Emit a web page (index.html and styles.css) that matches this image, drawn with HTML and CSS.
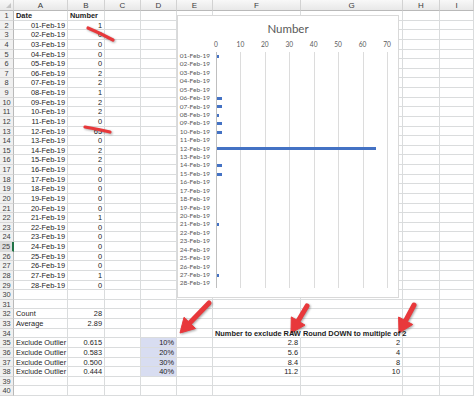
FILE: index.html
```html
<!DOCTYPE html>
<html>
<head>
<meta charset="utf-8">
<link rel="stylesheet" href="styles.css">
</head>
<body>
<div class="sheet">
<i class="ch corner"></i><i class="ch">A</i><i class="ch">B</i><i class="ch">C</i><i class="ch">D</i><i class="ch">E</i><i class="ch">F</i><i class="ch">G</i><i class="ch">H</i><i class="ch">I</i>
<i class="rh">1</i><i class="b">Date</i><i class="b">Number</i><i></i><i></i><i></i><i></i><i></i><i></i><i></i>
<i class="rh">2</i><i class="r">01-Feb-19</i><i class="r">1</i><i></i><i></i><i></i><i></i><i></i><i></i><i></i>
<i class="rh">3</i><i class="r">02-Feb-19</i><i class="r">0</i><i></i><i></i><i></i><i></i><i></i><i></i><i></i>
<i class="rh">4</i><i class="r">03-Feb-19</i><i class="r">0</i><i></i><i></i><i></i><i></i><i></i><i></i><i></i>
<i class="rh">5</i><i class="r">04-Feb-19</i><i class="r">0</i><i></i><i></i><i></i><i></i><i></i><i></i><i></i>
<i class="rh">6</i><i class="r">05-Feb-19</i><i class="r">0</i><i></i><i></i><i></i><i></i><i></i><i></i><i></i>
<i class="rh">7</i><i class="r">06-Feb-19</i><i class="r">2</i><i></i><i></i><i></i><i></i><i></i><i></i><i></i>
<i class="rh">8</i><i class="r">07-Feb-19</i><i class="r">2</i><i></i><i></i><i></i><i></i><i></i><i></i><i></i>
<i class="rh">9</i><i class="r">08-Feb-19</i><i class="r">1</i><i></i><i></i><i></i><i></i><i></i><i></i><i></i>
<i class="rh">10</i><i class="r">09-Feb-19</i><i class="r">2</i><i></i><i></i><i></i><i></i><i></i><i></i><i></i>
<i class="rh">11</i><i class="r">10-Feb-19</i><i class="r">2</i><i></i><i></i><i></i><i></i><i></i><i></i><i></i>
<i class="rh">12</i><i class="r">11-Feb-19</i><i class="r">0</i><i></i><i></i><i></i><i></i><i></i><i></i><i></i>
<i class="rh">13</i><i class="r">12-Feb-19</i><i class="r">65</i><i></i><i></i><i></i><i></i><i></i><i></i><i></i>
<i class="rh">14</i><i class="r">13-Feb-19</i><i class="r">0</i><i></i><i></i><i></i><i></i><i></i><i></i><i></i>
<i class="rh">15</i><i class="r">14-Feb-19</i><i class="r">2</i><i></i><i></i><i></i><i></i><i></i><i></i><i></i>
<i class="rh">16</i><i class="r">15-Feb-19</i><i class="r">2</i><i></i><i></i><i></i><i></i><i></i><i></i><i></i>
<i class="rh">17</i><i class="r">16-Feb-19</i><i class="r">0</i><i></i><i></i><i></i><i></i><i></i><i></i><i></i>
<i class="rh">18</i><i class="r">17-Feb-19</i><i class="r">0</i><i></i><i></i><i></i><i></i><i></i><i></i><i></i>
<i class="rh">19</i><i class="r">18-Feb-19</i><i class="r">0</i><i></i><i></i><i></i><i></i><i></i><i></i><i></i>
<i class="rh">20</i><i class="r">19-Feb-19</i><i class="r">0</i><i></i><i></i><i></i><i></i><i></i><i></i><i></i>
<i class="rh">21</i><i class="r">20-Feb-19</i><i class="r">0</i><i></i><i></i><i></i><i></i><i></i><i></i><i></i>
<i class="rh">22</i><i class="r">21-Feb-19</i><i class="r">1</i><i></i><i></i><i></i><i></i><i></i><i></i><i></i>
<i class="rh">23</i><i class="r">22-Feb-19</i><i class="r">0</i><i></i><i></i><i></i><i></i><i></i><i></i><i></i>
<i class="rh">24</i><i class="r">23-Feb-19</i><i class="r">0</i><i></i><i></i><i></i><i></i><i></i><i></i><i></i>
<i class="rh act">25</i><i class="r">24-Feb-19</i><i class="r">0</i><i></i><i></i><i></i><i></i><i></i><i></i><i></i>
<i class="rh">26</i><i class="r">25-Feb-19</i><i class="r">0</i><i></i><i></i><i></i><i></i><i></i><i></i><i></i>
<i class="rh">27</i><i class="r">26-Feb-19</i><i class="r">0</i><i></i><i></i><i></i><i></i><i></i><i></i><i></i>
<i class="rh">28</i><i class="r">27-Feb-19</i><i class="r">1</i><i></i><i></i><i></i><i></i><i></i><i></i><i></i>
<i class="rh">29</i><i class="r">28-Feb-19</i><i class="r">0</i><i></i><i></i><i></i><i></i><i></i><i></i><i></i>
<i class="rh">30</i><i></i><i></i><i></i><i></i><i></i><i></i><i></i><i></i><i></i>
<i class="rh">31</i><i></i><i></i><i></i><i></i><i></i><i></i><i></i><i></i><i></i>
<i class="rh">32</i><i>Count</i><i class="r">28</i><i></i><i></i><i></i><i></i><i></i><i></i><i></i>
<i class="rh">33</i><i>Average</i><i class="r">2.89</i><i></i><i></i><i></i><i></i><i></i><i></i><i></i>
<i class="rh">34</i><i></i><i></i><i></i><i></i><i></i><i class="b ov">Number to exclude RAW Round DOWN to multiple of 2</i><i></i><i></i><i></i>
<i class="rh">35</i><i>Exclude Outlier</i><i class="r">0.615</i><i></i><i class="r sel">10%</i><i></i><i class="r">2.8</i><i class="r">2</i><i></i><i></i>
<i class="rh">36</i><i>Exclude Outlier</i><i class="r">0.583</i><i></i><i class="r sel">20%</i><i></i><i class="r">5.6</i><i class="r">4</i><i></i><i></i>
<i class="rh">37</i><i>Exclude Outlier</i><i class="r">0.500</i><i></i><i class="r sel">30%</i><i></i><i class="r">8.4</i><i class="r">8</i><i></i><i></i>
<i class="rh">38</i><i>Exclude Outlier</i><i class="r">0.444</i><i></i><i class="r sel">40%</i><i></i><i class="r">11.2</i><i class="r">10</i><i></i><i></i>
<i class="rh">39</i><i></i><i></i><i></i><i></i><i></i><i></i><i></i><i></i><i></i>
<i class="rh">40</i><i></i><i></i><i></i><i></i><i></i><i></i><i></i><i></i><i></i>
</div>

<div class="chart">
  <div class="chart-title">Number</div>
  <div class="axis"><span>0</span><span>10</span><span>20</span><span>30</span><span>40</span><span>50</span><span>60</span><span>70</span></div>
  <div class="plot">
    <div class="labels">
      <span>01-Feb-19</span><span>02-Feb-19</span><span>03-Feb-19</span><span>04-Feb-19</span><span>05-Feb-19</span><span>06-Feb-19</span><span>07-Feb-19</span><span>08-Feb-19</span><span>09-Feb-19</span><span>10-Feb-19</span><span>11-Feb-19</span><span>12-Feb-19</span><span>13-Feb-19</span><span>14-Feb-19</span><span>15-Feb-19</span><span>16-Feb-19</span><span>17-Feb-19</span><span>18-Feb-19</span><span>19-Feb-19</span><span>20-Feb-19</span><span>21-Feb-19</span><span>22-Feb-19</span><span>23-Feb-19</span><span>24-Feb-19</span><span>25-Feb-19</span><span>26-Feb-19</span><span>27-Feb-19</span><span>28-Feb-19</span>
    </div>
    <div class="bars">
      <div><span style="width:2.44px"></span></div>
      <div><span style="width:0"></span></div>
      <div><span style="width:0"></span></div>
      <div><span style="width:0"></span></div>
      <div><span style="width:0"></span></div>
      <div><span style="width:4.89px"></span></div>
      <div><span style="width:4.89px"></span></div>
      <div><span style="width:2.44px"></span></div>
      <div><span style="width:4.89px"></span></div>
      <div><span style="width:4.89px"></span></div>
      <div><span style="width:0"></span></div>
      <div><span style="width:158.8px"></span></div>
      <div><span style="width:0"></span></div>
      <div><span style="width:4.89px"></span></div>
      <div><span style="width:4.89px"></span></div>
      <div><span style="width:0"></span></div>
      <div><span style="width:0"></span></div>
      <div><span style="width:0"></span></div>
      <div><span style="width:0"></span></div>
      <div><span style="width:0"></span></div>
      <div><span style="width:2.44px"></span></div>
      <div><span style="width:0"></span></div>
      <div><span style="width:0"></span></div>
      <div><span style="width:0"></span></div>
      <div><span style="width:0"></span></div>
      <div><span style="width:0"></span></div>
      <div><span style="width:2.44px"></span></div>
      <div><span style="width:0"></span></div>
    </div>
  </div>
</div>

<svg class="marks" width="474" height="396" viewBox="0 0 474 396">
  <g class="ink">
    <path d="M88 28 Q100 33 113 40" class="stroke"/>
    <path d="M85 127 Q97 129 110 132" class="stroke"/>
    <line x1="209" y1="303" x2="189.7" y2="322.9" class="shaft"/>
    <polygon points="180,333 195.5,328.5 184,317.3"/>
    <line x1="307" y1="306" x2="298.1" y2="321" class="shaft"/>
    <polygon points="291,333 305,325.1 291.3,316.9"/>
    <line x1="414" y1="305" x2="405.6" y2="320.7" class="shaft"/>
    <polygon points="399,333 412.7,324.5 398.6,317"/>
  </g>
</svg>
</body>
</html>
```

FILE: styles.css
```css
* { box-sizing: border-box; margin: 0; padding: 0; }
html, body { background: #fff; }
body {
  margin: 0;
  width: 474px;
  height: 396px;
  position: relative;
  overflow: hidden;
  font-family: "Liberation Sans", Arial, sans-serif;
}

.sheet {
  display: grid;
  grid-template-columns: 14px 54px 37px 36px 36px 36px 88px 102px 37px 1fr;
  grid-template-rows: 11px;
  grid-auto-rows: 9.63px;
  width: 474px;
}
.sheet > i {
  font-style: normal;
  font-size: 7.4px;
  line-height: 9px;
  color: #1c1c1c;
  border-right: 1px solid #dadcdd;
  border-bottom: 1px solid #dadcdd;
  padding: 0 2px;
  white-space: nowrap;
  overflow: hidden;
}
.sheet > .ch {
  background: linear-gradient(#f8f8f8, #e8e8e8);
  border-right: 1px solid #d2d2d2;
  border-bottom: 1px solid #b9b9b9;
  text-align: center;
  font-size: 8px;
  line-height: 11px;
  color: #3c3c3c;
  padding: 0;
}
.sheet > .corner { position: relative; }
.sheet > .corner::after {
  content: "";
  position: absolute;
  right: 2px;
  bottom: 2px;
  border-style: solid;
  border-width: 0 0 5px 5px;
  border-color: transparent transparent #c4c4c4 transparent;
}
.sheet > .rh {
  background: #f0f0f0;
  border-right: 1px solid #b9b9b9;
  border-bottom: 1px solid #d8d8d8;
  font-size: 7.4px;
  color: #3c3c3c;
  text-align: center;
  padding: 0;
}
.sheet > .act {
  background: #dedede;
  border-right: 2px solid #217346;
}
.sheet > .r { text-align: right; }
.sheet > .b { font-weight: bold; }
.sheet > .ov {
  overflow: visible;
  position: relative;
  z-index: 1;
  border-right-color: transparent;
}
.sheet > .sel { background: #d8ddf1; }

.chart {
  position: absolute;
  left: 177px;
  top: 15px;
  width: 222px;
  height: 283px;
  background: #fff;
  border: 1px solid #d9d9d9;
  font-family: Lato, "Liberation Sans", sans-serif;
  color: #595959;
}
.chart-title {
  margin-top: 2px;
  height: 22px;
  line-height: 22px;
  text-align: center;
  font-size: 11.5px;
}
.axis {
  display: flex;
  margin-left: 25.8px;
  height: 8px;
  line-height: 8px;
  font-size: 6.6px;
}
.axis span {
  flex: 0 0 24.43px;
  text-align: center;
}
.plot {
  display: flex;
  margin-top: 4px;
}
.labels {
  width: 32px;
  display: flex;
  flex-direction: column;
  align-items: flex-end;
  font-size: 6.5px;
  white-space: nowrap;
}
.labels span {
  height: 8.43px;
  line-height: 8.43px;
}
.bars {
  margin-left: 6px;
  width: 172px;
  border-left: 1px solid #bfbfbf;
  background: repeating-linear-gradient(to right, transparent 0 23.43px, #dcdcdc 23.43px 24.43px);
  display: flex;
  flex-direction: column;
}
.bars div {
  height: 8.43px;
  display: flex;
  align-items: center;
}
.bars span {
  height: 3px;
  background: #4472c4;
}

.marks {
  position: absolute;
  left: 0;
  top: 0;
  pointer-events: none;
}
.ink {
  fill: #e8383b;
  stroke: #e8383b;
  filter: drop-shadow(1px 1.5px 1px rgba(0, 0, 0, 0.35));
}
.ink polygon { stroke-width: 1; stroke-linejoin: round; }
.stroke {
  fill: none;
  stroke-width: 3.2;
  stroke-linecap: round;
}
.shaft {
  stroke-width: 5;
  stroke-linecap: round;
}
```
